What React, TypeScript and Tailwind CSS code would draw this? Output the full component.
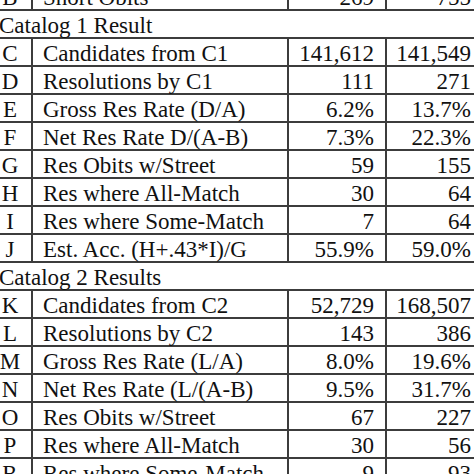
type Row =
  | { kind: 'section'; title: string }
  | { kind: 'data'; key: string; label: string; a: string; b: string }

const rows: Row[] = [
  { kind: 'data', key: 'B', label: 'Short Obits', a: '269', b: '755' },
  { kind: 'section', title: 'Catalog 1 Result' },
  { kind: 'data', key: 'C', label: 'Candidates from C1', a: '141,612', b: '141,549' },
  { kind: 'data', key: 'D', label: 'Resolutions by C1', a: '111', b: '271' },
  { kind: 'data', key: 'E', label: 'Gross Res Rate (D/A)', a: '6.2%', b: '13.7%' },
  { kind: 'data', key: 'F', label: 'Net Res Rate D/(A-B)', a: '7.3%', b: '22.3%' },
  { kind: 'data', key: 'G', label: 'Res Obits w/Street', a: '59', b: '155' },
  { kind: 'data', key: 'H', label: 'Res where All-Match', a: '30', b: '64' },
  { kind: 'data', key: 'I', label: 'Res where Some-Match', a: '7', b: '64' },
  { kind: 'data', key: 'J', label: 'Est. Acc. (H+.43*I)/G', a: '55.9%', b: '59.0%' },
  { kind: 'section', title: 'Catalog 2 Results' },
  { kind: 'data', key: 'K', label: 'Candidates from C2', a: '52,729', b: '168,507' },
  { kind: 'data', key: 'L', label: 'Resolutions by C2', a: '143', b: '386' },
  { kind: 'data', key: 'M', label: 'Gross Res Rate (L/A)', a: '8.0%', b: '19.6%' },
  { kind: 'data', key: 'N', label: 'Net Res Rate (L/(A-B)', a: '9.5%', b: '31.7%' },
  { kind: 'data', key: 'O', label: 'Res Obits w/Street', a: '67', b: '227' },
  { kind: 'data', key: 'P', label: 'Res where All-Match', a: '30', b: '56' },
  { kind: 'data', key: 'R', label: 'Res where Some-Match', a: '9', b: '93' },
]

const cell = 'h-[28px] pt-[3px] leading-[23px] border-b-2 border-[#3c3c3c] whitespace-nowrap'

export default function App() {
  return (
    <div className="w-[474px] h-[474px] overflow-hidden bg-white text-[#111] font-['Liberation_Serif','Times_New_Roman',serif] text-[23px]">
      <div className="-ml-[11px] -mt-[17px] w-[497px] flex flex-col">
        {rows.map((r, i) =>
          r.kind === 'section' ? (
            <div key={i} className={`${cell} pl-[10px]`}>
              {r.title}
            </div>
          ) : (
            <div key={i} className="flex">
              <div className={`${cell} w-[44px] shrink-0 border-r-2 text-center`}>{r.key}</div>
              <div className={`${cell} w-[256px] shrink-0 border-r-2 pl-[10px]`}>{r.label}</div>
              <div className={`${cell} w-[98px] shrink-0 border-r-2 pr-[11px] text-right`}>{r.a}</div>
              <div className={`${cell} w-[100px] shrink-0 border-r-2 pr-[14px] text-right`}>{r.b}</div>
            </div>
          )
        )}
      </div>
    </div>
  )
}
